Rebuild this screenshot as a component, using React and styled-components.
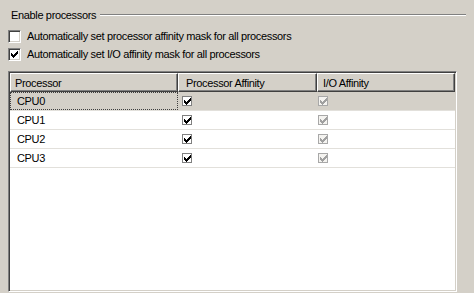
import React from "react";
import styled, { createGlobalStyle } from "styled-components";

const Global = createGlobalStyle`
  html, body { margin: 0; padding: 0; background: #D4D0C8; overflow: hidden; }
  body { width: 474px; height: 293px; font-family: "Liberation Sans", Arial, sans-serif; font-size: 11px; letter-spacing: -0.35px; color: #000; }
`;

const Page = styled.div`
  width: 474px;
  height: 293px;
  box-sizing: border-box;
  padding: 8px 8px 0 8px;
  display: flex;
  flex-direction: column;
`;

const Legend = styled.div`
  display: flex;
  align-items: center;
  height: 14px;
  padding-left: 3px;
  gap: 4px;
`;

const LegendLine = styled.div`
  flex: 1;
  height: 0;
  border-top: 1px solid #808080;
  border-bottom: 1px solid #ffffff;
`;

const Options = styled.div`
  margin-top: 5px;
  display: flex;
  flex-direction: column;
`;

const OptionRow = styled.div`
  display: flex;
  align-items: center;
  height: 18px;
  gap: 6px;
`;

const Box = styled.div`
  width: 13px;
  height: 13px;
  box-sizing: border-box;
  background: #fff;
  border-top: 1px solid #808080;
  border-left: 1px solid #808080;
  border-right: 1px solid #fff;
  border-bottom: 1px solid #fff;
  box-shadow: inset 1px 1px 0 #404040, inset -1px -1px 0 #D4D0C8;
  display: flex;
  align-items: center;
  justify-content: center;
`;

const List = styled.div`
  margin-top: 8px;
  width: 449px;
  height: 221px;
  box-sizing: border-box;
  background: #fff;
  border-top: 1px solid #808080;
  border-left: 1px solid #808080;
  border-right: 1px solid #fff;
  border-bottom: 1px solid #fff;
  box-shadow: inset 1px 1px 0 #404040, inset -1px -1px 0 #D4D0C8;
  padding: 1px;
  display: flex;
  flex-direction: column;
`;

const Grid = styled.div`
  display: grid;
  grid-template-columns: 168px 139px 138px;
`;

const HeaderCell = styled.div`
  height: 19px;
  box-sizing: border-box;
  background: #D4D0C8;
  border-top: 1px solid #fff;
  border-left: 1px solid #fff;
  border-right: 1px solid #404040;
  border-bottom: 1px solid #404040;
  box-shadow: inset -1px -1px 0 #808080;
  display: flex;
  align-items: center;
  padding-left: ${(p) => p.$pad}px;
  white-space: nowrap;
  overflow: hidden;
`;

const Cell = styled.div`
  height: 19px;
  box-sizing: border-box;
  border-bottom: 1px solid #E2E0DB;
  background: ${(p) => (p.$selected ? "#D4D0C8" : "#fff")};
  display: flex;
  align-items: center;
  padding-left: ${(p) => p.$pad}px;
  position: relative;
`;

const Focus = styled.div`
  position: absolute;
  inset: 0 0 0 0;
  border: 1px dotted #404040;
  pointer-events: none;
`;

const BigCheck = () => (
  <svg width="7" height="7" viewBox="0 0 7 7" shapeRendering="crispEdges">
    <path d="M0 2h1v1h1v1h1V3h1V2h1V1h1V0h1v3H6v1H5v1H4v1H3v1H2V6H1V5H0z" fill="#000" />
  </svg>
);

const SmallCheck = ({ disabled }) => (
  <svg width="10" height="10" viewBox="0 0 10 10" shapeRendering="crispEdges">
    <rect x="0.5" y="0.5" width="9" height="9" fill={disabled ? "#F4F3F0" : "#fff"} stroke={disabled ? "#A8A8A8" : "#808080"} />
    <path d="M2 4h1v1h1v1h1V5h1V4h1V3h1V2h1v3H8v1H7v1H6v1H5v1H4V8H3V7H2z" fill={disabled ? "#A0A0A0" : "#000"} />
  </svg>
);

const rows = ["CPU0", "CPU1", "CPU2", "CPU3"];

export default function App() {
  return (
    <>
      <Global />
      <Page>
        <Legend>
          <span>Enable processors</span>
          <LegendLine />
        </Legend>
        <Options>
          <OptionRow>
            <Box />
            <span>Automatically set processor affinity mask for all processors</span>
          </OptionRow>
          <OptionRow>
            <Box>
              <BigCheck />
            </Box>
            <span>Automatically set I/O affinity mask for all processors</span>
          </OptionRow>
        </Options>
        <List>
          <Grid>
            <HeaderCell $pad={4}>Processor</HeaderCell>
            <HeaderCell $pad={7}>Processor Affinity</HeaderCell>
            <HeaderCell $pad={5}>I/O Affinity</HeaderCell>
            {rows.map((r, i) => (
              <React.Fragment key={r}>
                <Cell $pad={7} $selected={i === 0}>
                  {r}
                  {i === 0 && <Focus />}
                </Cell>
                <Cell $pad={4} $selected={i === 0}>
                  <SmallCheck />
                </Cell>
                <Cell $pad={1} $selected={i === 0}>
                  <SmallCheck disabled />
                </Cell>
              </React.Fragment>
            ))}
          </Grid>
        </List>
      </Page>
    </>
  );
}
